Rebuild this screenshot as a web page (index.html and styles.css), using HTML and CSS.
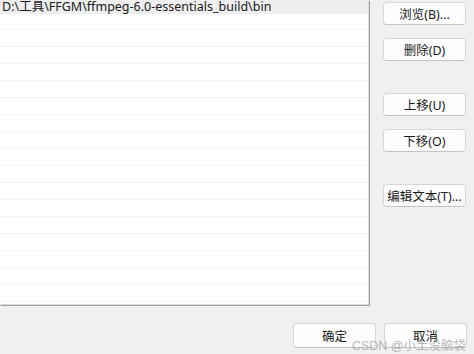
FILE: index.html
```html
<!DOCTYPE html>
<html lang="zh-CN">
<head>
  <meta charset="UTF-8">
  <title>编辑环境变量</title>
  <link rel="stylesheet" href="styles.css">
</head>
<body>
  <div class="main">
    <div class="path-list">
      <div class="row selected">D:\工具\FFGM\ffmpeg-6.0-essentials_build\bin</div>
      <div class="row"></div>
      <div class="row"></div>
      <div class="row"></div>
      <div class="row"></div>
      <div class="row"></div>
      <div class="row"></div>
      <div class="row"></div>
      <div class="row"></div>
      <div class="row"></div>
      <div class="row"></div>
      <div class="row"></div>
      <div class="row"></div>
      <div class="row"></div>
      <div class="row"></div>
      <div class="row"></div>
      <div class="row"></div>
      <div class="row"></div>
      <div class="row"></div>
    </div>

    <div class="side-buttons">
      <button class="btn">浏览(B)...</button>
      <button class="btn">删除(D)</button>
      <button class="btn gap-top">上移(U)</button>
      <button class="btn">下移(O)</button>
      <button class="btn gap-top">编辑文本(T)...</button>
    </div>
  </div>

  <div class="footer">
    <button class="btn">确定</button>
    <button class="btn">取消</button>
    <span class="watermark">CSDN @小土没脑袋</span>
  </div>
</body>
</html>
```

FILE: styles.css
```css
html, body {
  margin: 0;
  padding: 0;
  width: 474px;
  height: 354px;
  overflow: hidden;
  background: #f0f0f0;
  color: #1a1a1a;
  font-family: "Noto Sans", "Noto Sans CJK SC", sans-serif;
  font-size: 12.5px;
}
.main {
  display: flex;
  align-items: flex-start;
}
.path-list {
  width: 368px;
  height: 304px;
  background: #fff;
  border-right: 1px solid #dadada;
  border-bottom: 1px solid #dadada;
  box-shadow: 1px 1px 0 #a0a0a0;
  overflow: hidden;
  flex-shrink: 0;
}
.row {
  height: 16px;
  border-bottom: 1px solid #f2f2f2;
}
.row.selected {
  height: 14px;
  line-height: 14px;
  padding-left: 2px;
  background: #eeeeee;
  border-bottom: none;
  white-space: nowrap;
}
.row.selected + .row {
  height: 15px;
}
.side-buttons {
  display: flex;
  flex-direction: column;
  gap: 13px;
  margin-left: 14px;
  padding-top: 2px;
}
.btn {
  width: 83px;
  height: 23px;
  padding: 0;
  background: #fdfdfd;
  color: #1a1a1a;
  border: 1px solid #d6d6d6;
  border-bottom-color: #c4c4c4;
  border-radius: 4px;
  font-family: "Noto Sans", "Noto Sans CJK SC", sans-serif;
  font-size: 12.5px;
  cursor: pointer;
}
.btn.gap-top {
  margin-top: 19px;
}
.footer {
  position: relative;
  display: flex;
  justify-content: flex-end;
  gap: 8px;
  padding: 18px 7px 0 0;
}
.footer .btn {
  width: 83px;
  height: 25px;
}
.watermark {
  position: absolute;
  right: 8px;
  top: 30px;
  color: rgba(150, 150, 150, 0.7);
  font-family: "Liberation Sans", "Noto Sans CJK SC", sans-serif;
  font-size: 12.5px;
  white-space: nowrap;
}
```
